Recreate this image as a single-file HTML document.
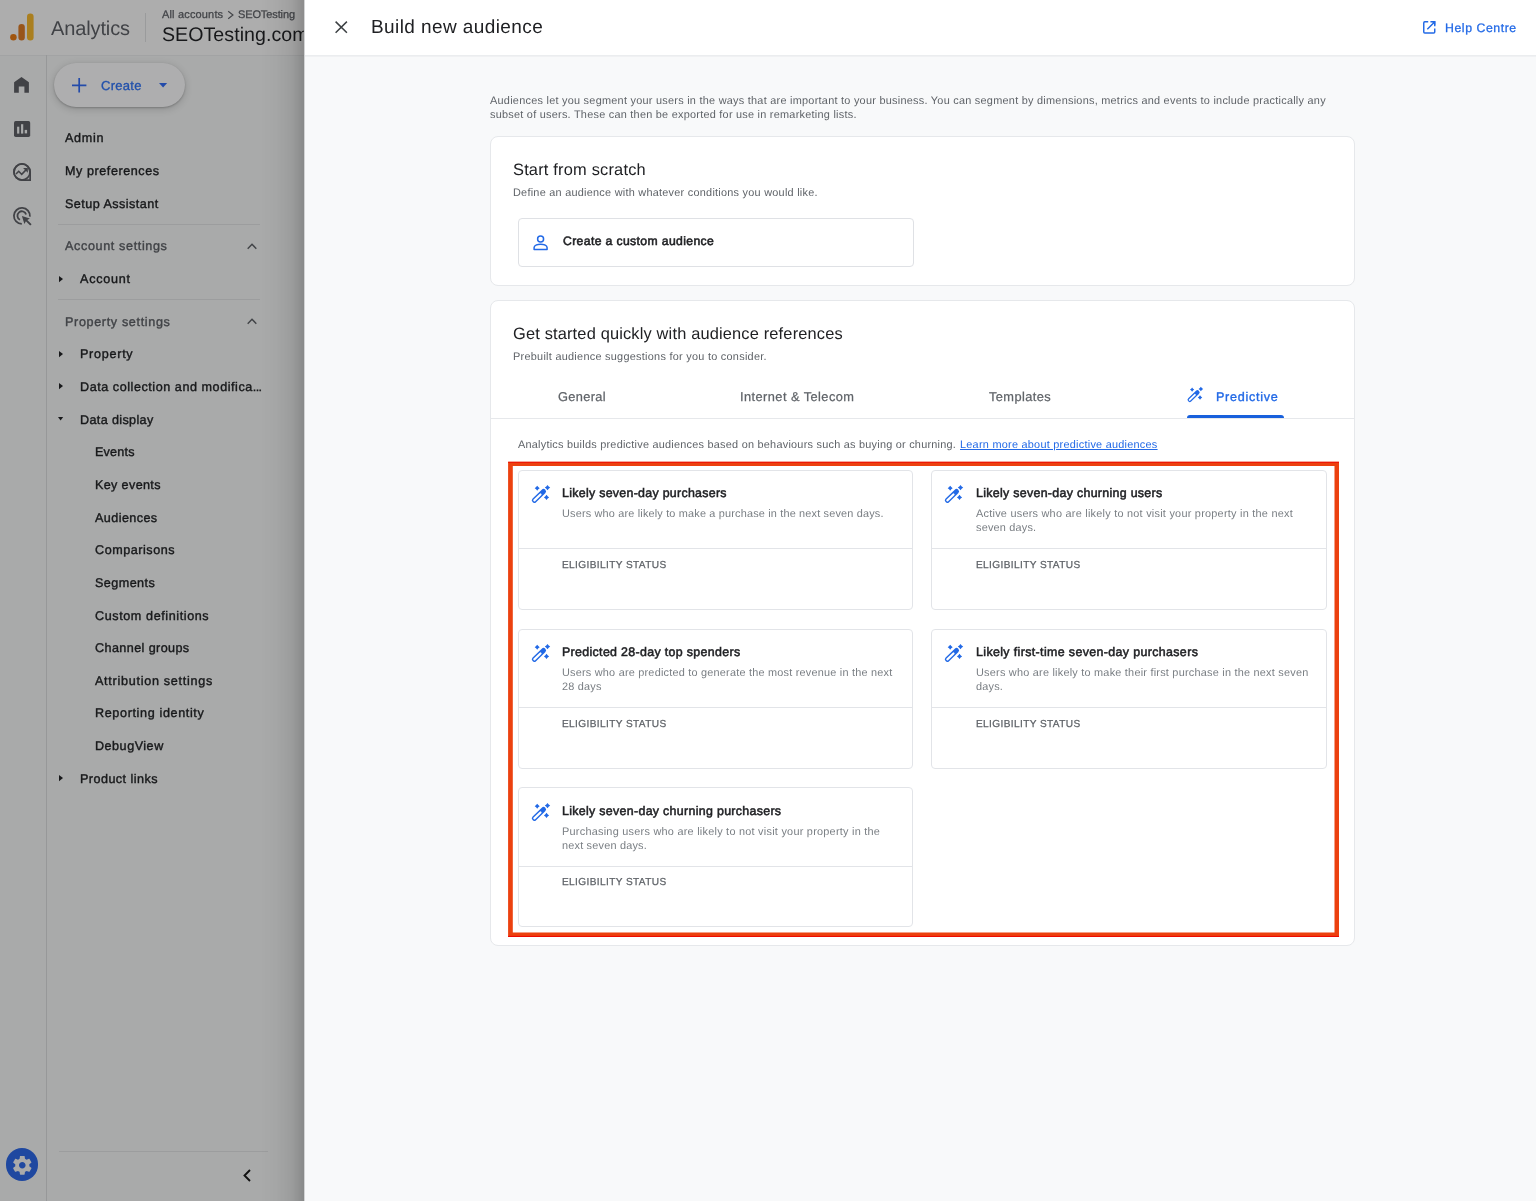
<!DOCTYPE html>
<html lang="en">
<head>
<meta charset="utf-8">
<title>Build new audience</title>
<style>
*{box-sizing:border-box;margin:0;padding:0}
html,body{width:1536px;height:1201px;overflow:hidden;background:#f8f9fa;font-family:"Liberation Sans",sans-serif;color:#202124}
.tx{position:absolute;white-space:nowrap;will-change:transform;text-rendering:geometricPrecision}
.ab{position:absolute}
svg{position:absolute;overflow:visible}
#side{position:absolute;left:0;top:0;width:305px;height:1201px;background:#a9aaaa;overflow:hidden}
#main{position:absolute;left:304px;top:0;width:1232px;height:1201px;background:#f8f9fa}
.card{position:absolute;background:#fff;border:1px solid #e6e8eb;border-radius:8px}
.ac{position:absolute;width:395.4px;height:140.2px;background:#fff;border:1px solid #e2e4e8;border-radius:4px}
.ac i{position:absolute;left:0;right:0;top:77.4px;height:1px;background:#e2e4e8}
</style>
</head>
<body>

<div id="side">
<div class="ab" style="left:0;top:0;width:305px;height:55px;background:#adadad"></div>
<div class="ab" style="left:0;top:54.5px;width:305px;height:1px;background:#a2a3a4"></div>
<div class="ab" style="left:46px;top:55px;width:1px;height:1146px;background:#979899"></div>
<svg style="left:0;top:0" width="46" height="55" viewBox="0 0 46 55"><circle cx="13.4" cy="37.2" r="3.25" fill="#a0550f"/><rect x="18.4" y="23.9" width="6.4" height="16.55" rx="3.2" fill="#98551a"/><rect x="27" y="13.4" width="6.6" height="27.05" rx="3.3" fill="#aa7f1f"/></svg>
<div class="tx" style="left:51.00px;top:16px;font-size:20px;line-height:26px;letter-spacing:-0.125px;color:#414347;">Analytics</div>
<div class="ab" style="left:145px;top:12.5px;width:1px;height:29px;background:#9a9b9c"></div>
<div class="tx" style="left:161.50px;top:8px;font-size:11px;line-height:14px;letter-spacing:0.165px;color:#414347;-webkit-text-stroke:0.25px #414347;">All accounts</div>
<svg style="left:227px;top:10px" width="8" height="10" viewBox="0 0 8 10"><path d="M1.2 1.2 L6 5 L1.2 8.8" fill="none" stroke="#414347" stroke-width="1.1"/></svg>
<div class="tx" style="left:238.00px;top:8px;font-size:11px;line-height:14px;letter-spacing:-0.120px;color:#414347;-webkit-text-stroke:0.25px #414347;">SEOTesting</div>
<div class="tx" style="left:162.00px;top:23px;font-size:19.6px;line-height:25px;color:#17181a;letter-spacing:.05px;">SEOTesting.com</div>
<div class="ab" style="left:53.5px;top:63px;width:131.5px;height:44px;border-radius:22px;background:#aeaeaf;box-shadow:0 1px 2px rgba(0,0,0,.22),0 2px 6px 2px rgba(0,0,0,.10)"></div>
<svg style="left:71.8px;top:77.7px" width="14.4" height="14.6" viewBox="0 0 14.4 14.6"><path d="M7.2 0V14.6M0 7.3H14.4" stroke="#234baa" stroke-width="1.7" fill="none"/></svg>
<div class="tx" style="left:101.20px;top:77px;font-size:13px;line-height:17px;letter-spacing:0.280px;color:#2150ab;-webkit-text-stroke:0.32px #2150ab;">Create</div>
<svg style="left:159.2px;top:83.2px" width="8.2" height="4.6" viewBox="0 0 8.2 4.6"><path d="M0 0H8.2L4.1 4.6Z" fill="#234baa"/></svg>
<svg style="left:14.2px;top:77.2px" width="15" height="16" viewBox="0 0 15 16"><path d="M7.5 0 L14.9 5.3 V15.7 H10.4 V9.6 H4.8 V15.7 H0.1 V5.3 Z" fill="#414246"/></svg>
<svg style="left:13.7px;top:120.8px" width="16.2" height="16" viewBox="0 0 16.2 16"><rect x="0" y="0" width="16.2" height="16" rx="1.7" fill="#414246"/><rect x="3.1" y="5.7" width="2.2" height="6.9" fill="#a9aaaa"/><rect x="7.05" y="3.2" width="2.2" height="9.4" fill="#a9aaaa"/><rect x="10.7" y="8.9" width="2.4" height="3.5" fill="#a9aaaa"/></svg>
<svg style="left:12.7px;top:163.3px" width="18.2" height="18" viewBox="0 0 18.2 18"><path d="M9 0.95 A8.05 8.05 0 1 0 9 17.05 H17.15 V9 A8.05 8.05 0 0 0 9 0.95 Z" fill="none" stroke="#414246" stroke-width="1.7"/><circle cx="9" cy="9" r="8.05" fill="none" stroke="#414246" stroke-width="1.7"/><path d="M3 11 L5.7 8.3 L8.7 11.3 L13 6.9" fill="none" stroke="#414246" stroke-width="1.55"/><path d="M10.1 5.0 H14.8 V9.7 Z" fill="#414246"/></svg>
<svg style="left:12.7px;top:206.8px" width="19" height="18.5" viewBox="0 0 19 18.5"><path d="M16.9 9.6 A8 8 0 1 0 8.8 16.95" fill="none" stroke="#414246" stroke-width="1.8"/><path d="M13.1 7.6 A4.4 4.4 0 1 0 7.0 12.7" fill="none" stroke="#414246" stroke-width="1.8"/><path d="M8.9 8.9 L16.9 11.4 L14.3 12.9 L18.6 17.2 L17.2 18.6 L12.9 14.3 L11.4 16.9 Z" fill="#414246"/></svg>
<div class="tx" style="left:65.30px;top:130px;font-size:12.6px;line-height:16px;letter-spacing:0.695px;color:#17181a;-webkit-text-stroke:0.38px #17181a;">Admin</div>
<div class="tx" style="left:65.30px;top:163px;font-size:12.6px;line-height:16px;letter-spacing:0.560px;color:#17181a;-webkit-text-stroke:0.38px #17181a;">My preferences</div>
<div class="tx" style="left:65.30px;top:196px;font-size:12.6px;line-height:16px;letter-spacing:0.459px;color:#17181a;-webkit-text-stroke:0.38px #17181a;">Setup Assistant</div>
<div class="tx" style="left:65.30px;top:238px;font-size:12.6px;line-height:16px;letter-spacing:0.634px;color:#414347;-webkit-text-stroke:0.38px #414347;">Account settings</div>
<div class="tx" style="left:80.00px;top:271px;font-size:12.6px;line-height:16px;letter-spacing:0.742px;color:#17181a;-webkit-text-stroke:0.38px #17181a;">Account</div>
<div class="tx" style="left:65.30px;top:314px;font-size:12.6px;line-height:16px;letter-spacing:0.646px;color:#414347;-webkit-text-stroke:0.38px #414347;">Property settings</div>
<div class="tx" style="left:80.00px;top:346px;font-size:12.6px;line-height:16px;letter-spacing:0.725px;color:#17181a;-webkit-text-stroke:0.38px #17181a;">Property</div>
<div class="tx" style="left:80.00px;top:379px;font-size:12.6px;line-height:16px;letter-spacing:0.547px;color:#17181a;-webkit-text-stroke:0.38px #17181a;">Data collection and modifica<span style="letter-spacing:-.7px">...</span></div>
<div class="tx" style="left:80.00px;top:412px;font-size:12.6px;line-height:16px;letter-spacing:0.358px;color:#17181a;-webkit-text-stroke:0.38px #17181a;">Data display</div>
<div class="tx" style="left:94.60px;top:444px;font-size:12.6px;line-height:16px;letter-spacing:0.201px;color:#17181a;-webkit-text-stroke:0.38px #17181a;">Events</div>
<div class="tx" style="left:94.60px;top:477px;font-size:12.6px;line-height:16px;letter-spacing:0.355px;color:#17181a;-webkit-text-stroke:0.38px #17181a;">Key events</div>
<div class="tx" style="left:94.60px;top:510px;font-size:12.6px;line-height:16px;letter-spacing:0.420px;color:#17181a;-webkit-text-stroke:0.38px #17181a;">Audiences</div>
<div class="tx" style="left:94.60px;top:542px;font-size:12.6px;line-height:16px;letter-spacing:0.539px;color:#17181a;-webkit-text-stroke:0.38px #17181a;">Comparisons</div>
<div class="tx" style="left:94.60px;top:575px;font-size:12.6px;line-height:16px;letter-spacing:0.434px;color:#17181a;-webkit-text-stroke:0.38px #17181a;">Segments</div>
<div class="tx" style="left:94.60px;top:608px;font-size:12.6px;line-height:16px;letter-spacing:0.592px;color:#17181a;-webkit-text-stroke:0.38px #17181a;">Custom definitions</div>
<div class="tx" style="left:94.60px;top:640px;font-size:12.6px;line-height:16px;letter-spacing:0.403px;color:#17181a;-webkit-text-stroke:0.38px #17181a;">Channel groups</div>
<div class="tx" style="left:94.60px;top:673px;font-size:12.6px;line-height:16px;letter-spacing:0.719px;color:#17181a;-webkit-text-stroke:0.38px #17181a;">Attribution settings</div>
<div class="tx" style="left:94.60px;top:705px;font-size:12.6px;line-height:16px;letter-spacing:0.634px;color:#17181a;-webkit-text-stroke:0.38px #17181a;">Reporting identity</div>
<div class="tx" style="left:94.60px;top:738px;font-size:12.6px;line-height:16px;letter-spacing:0.505px;color:#17181a;-webkit-text-stroke:0.38px #17181a;">DebugView</div>
<div class="tx" style="left:80.00px;top:771px;font-size:12.6px;line-height:16px;letter-spacing:0.447px;color:#17181a;-webkit-text-stroke:0.38px #17181a;">Product links</div>
<div class="ab" style="left:58px;top:223.9px;width:201.5px;height:1px;background:#9c9d9e"></div>
<div class="ab" style="left:58px;top:299.1px;width:201.5px;height:1px;background:#9c9d9e"></div>
<div class="ab" style="left:59px;top:1150.7px;width:209px;height:1px;background:#9c9d9e"></div>
<svg style="left:246.6px;top:242.70000000000002px" width="10" height="6.4" viewBox="0 0 10 6.4"><path d="M0.7 5.7 L5 1.2 L9.3 5.7" fill="none" stroke="#414347" stroke-width="1.4"/></svg>
<svg style="left:246.6px;top:318.0px" width="10" height="6.4" viewBox="0 0 10 6.4"><path d="M0.7 5.7 L5 1.2 L9.3 5.7" fill="none" stroke="#414347" stroke-width="1.4"/></svg>
<svg style="left:58.9px;top:275.5px" width="4" height="6.2" viewBox="0 0 4 6.2"><path d="M0 0 L4 3.1 L0 6.2Z" fill="#17181a"/></svg>
<svg style="left:58.9px;top:350.7px" width="4" height="6.2" viewBox="0 0 4 6.2"><path d="M0 0 L4 3.1 L0 6.2Z" fill="#17181a"/></svg>
<svg style="left:58.9px;top:383.4px" width="4" height="6.2" viewBox="0 0 4 6.2"><path d="M0 0 L4 3.1 L0 6.2Z" fill="#17181a"/></svg>
<svg style="left:58.9px;top:775.0px" width="4" height="6.2" viewBox="0 0 4 6.2"><path d="M0 0 L4 3.1 L0 6.2Z" fill="#17181a"/></svg>
<svg style="left:58.3px;top:417.4px" width="5.2" height="3.6" viewBox="0 0 5.2 3.6"><path d="M0 0 H5.2 L2.6 3.6Z" fill="#17181a"/></svg>
<svg style="left:242.5px;top:1168.5px" width="8" height="13" viewBox="0 0 8 13"><path d="M7 1 L1.5 6.5 L7 12" fill="none" stroke="#111" stroke-width="1.9"/></svg>
<div class="ab" style="left:5.8px;top:1148.3px;width:32.4px;height:32.4px;border-radius:50%;background:#1f48a0"></div>
<svg style="left:10.5px;top:1153.6px" width="22.6" height="22.6" viewBox="0 0 24 24"><path fill="#a9aaaa" d="M19.43 12.98c.04-.32.07-.64.07-.98s-.03-.66-.07-.98l2.11-1.65c.19-.15.24-.42.12-.64l-2-3.46c-.12-.22-.39-.3-.61-.22l-2.49 1c-.52-.4-1.08-.73-1.69-.98l-.38-2.65C14.46 2.18 14.25 2 14 2h-4c-.25 0-.46.18-.49.42l-.38 2.65c-.61.25-1.17.59-1.69.98l-2.49-1c-.23-.09-.49 0-.61.22l-2 3.46c-.13.22-.07.49.12.64l2.11 1.65c-.04.32-.07.65-.07.98s.03.66.07.98l-2.11 1.65c-.19.15-.24.42-.12.64l2 3.46c.12.22.39.3.61.22l2.49-1c.52.4 1.08.73 1.69.98l.38 2.65c.03.24.24.42.49.42h4c.25 0 .46-.18.49-.42l.38-2.65c.61-.25 1.17-.59 1.69-.98l2.49 1c.23.09.49 0 .61-.22l2-3.46c.12-.22.07-.49-.12-.64l-2.11-1.65zM12 15.5c-1.93 0-3.5-1.57-3.5-3.5s1.57-3.5 3.5-3.5 3.5 1.57 3.5 3.5-1.57 3.5-3.5 3.5z"/></svg>
<div class="ab" style="right:0;top:0;width:44px;height:1201px;background:linear-gradient(to right,rgba(0,0,0,0) 0%,rgba(0,0,0,.025) 35%,rgba(0,0,0,.08) 70%,rgba(0,0,0,.20) 100%)"></div>
</div>
<div id="main">
<div class="ab" style="left:0;top:0;width:1232px;height:55.5px;background:#fff"></div>
<div class="ab" style="left:0;top:55px;width:1232px;height:1px;background:#ebedef"></div>
<div class="ab" style="left:0;top:56px;width:1232px;height:1px;background:#f0f1f3"></div>
<div class="ab" style="left:0;top:0;width:1px;height:1201px;background:#d3d4d5"></div>
</div>
<svg style="left:334.9px;top:21.1px" width="12.5" height="12.3" viewBox="0 0 12.5 12.3"><path d="M0.6 0.6 L11.9 11.7 M11.9 0.6 L0.6 11.7" stroke="#3c4043" stroke-width="1.5" fill="none"/></svg>
<div class="tx" style="left:371.30px;top:15px;font-size:19px;line-height:25px;letter-spacing:0.410px;color:#202124;">Build new audience</div>
<svg style="left:1422.8px;top:20.8px" width="12.5" height="12.7" viewBox="0 0 12.5 12.7"><path d="M5.2 0.8 H1.8 Q0.75 0.8 0.75 1.9 V10.9 Q0.75 11.95 1.8 11.95 H10.7 Q11.75 11.95 11.75 10.9 V7.4" fill="none" stroke="#2269e6" stroke-width="1.45"/><path d="M7.4 0.8 H11.75 V5.2 M11.6 0.95 L4.3 8.3" fill="none" stroke="#2269e6" stroke-width="1.45"/><path d="M8.6 0.3 H12.3 V4 Z" fill="#2269e6"/></svg>
<div class="tx" style="left:1444.60px;top:20px;font-size:12.3px;line-height:16px;letter-spacing:0.558px;color:#2269e6;-webkit-text-stroke:0.28px #2269e6;">Help Centre</div>
<div class="tx" style="left:490.30px;top:94px;font-size:10.9px;line-height:14px;letter-spacing:0.257px;color:#5f6368;">Audiences let you segment your users in the ways that are important to your business. You can segment by dimensions, metrics and events to include practically any</div>
<div class="tx" style="left:490.30px;top:108px;font-size:10.9px;line-height:14px;letter-spacing:0.249px;color:#5f6368;">subset of users. These can then be exported for use in remarketing lists.</div>
<div class="card" style="left:490.1px;top:136.1px;width:864.5px;height:149.6px"></div>
<div class="tx" style="left:512.60px;top:160px;font-size:16.4px;line-height:21px;letter-spacing:0.194px;color:#202124;">Start from scratch</div>
<div class="tx" style="left:512.60px;top:186px;font-size:10.9px;line-height:14px;letter-spacing:0.251px;color:#5f6368;">Define an audience with whatever conditions you would like.</div>
<div class="ab" style="left:518px;top:218px;width:396px;height:49px;border:1px solid #dfe1e5;border-radius:4px;background:#fff"></div>
<svg style="left:532.9px;top:234.8px" width="15.2" height="15.2" viewBox="0 0 15.2 15.2"><circle cx="7.6" cy="4.0" r="3.0" fill="none" stroke="#2269e6" stroke-width="1.5"/><path d="M1.1 14.4 V12.6 C1.1 10.2 5 9.2 7.6 9.2 C10.2 9.2 14.1 10.2 14.1 12.6 V14.4 Z" fill="none" stroke="#2269e6" stroke-width="1.5" stroke-linejoin="round"/></svg>
<div class="tx" style="left:563.00px;top:233px;font-size:12.2px;line-height:16px;letter-spacing:0.372px;color:#202124;-webkit-text-stroke:0.55px #202124;">Create a custom audience</div>
<div class="card" style="left:490.1px;top:300.2px;width:864.5px;height:645.9px"></div>
<div class="tx" style="left:512.60px;top:324px;font-size:16.4px;line-height:21px;letter-spacing:0.166px;color:#202124;">Get started quickly with audience references</div>
<div class="tx" style="left:512.60px;top:350px;font-size:10.9px;line-height:14px;letter-spacing:0.270px;color:#5f6368;">Prebuilt audience suggestions for you to consider.</div>
<div class="tx" style="left:557.90px;top:388px;font-size:12.8px;line-height:17px;letter-spacing:0.339px;color:#5f6368;-webkit-text-stroke:0.25px #5f6368;">General</div>
<div class="tx" style="left:740.10px;top:388px;font-size:12.8px;line-height:17px;letter-spacing:0.441px;color:#5f6368;-webkit-text-stroke:0.25px #5f6368;">Internet &amp; Telecom</div>
<div class="tx" style="left:988.90px;top:388px;font-size:12.8px;line-height:17px;letter-spacing:0.429px;color:#5f6368;-webkit-text-stroke:0.25px #5f6368;">Templates</div>
<div class="tx" style="left:1215.50px;top:389px;font-size:12.6px;line-height:16px;letter-spacing:0.721px;color:#2269e6;-webkit-text-stroke:0.35px #2269e6;">Predictive</div>
<div class="ab" style="left:491px;top:418px;width:862.6px;height:1px;background:#e6e8eb"></div>
<div class="ab" style="left:1186.7px;top:415px;width:97.8px;height:3px;background:#1860dc;border-radius:3px 3px 0 0"></div>
<svg style="left:1186.2px;top:385.85px" width="18.7" height="17.0" viewBox="0 0 22 20"><path d="M4.35 16.35 L13.5 7.5" stroke="#2269e6" stroke-width="5.0" stroke-linecap="round" fill="none"/><path d="M4.35 16.35 L10.48 10.42" stroke="#fff" stroke-width="2.2" stroke-linecap="round" fill="none"/><path d="M7.2 1.7000000000000002 L8.3 3.1 L9.7 4.2 L8.3 5.300000000000001 L7.2 6.7 L6.1 5.300000000000001 L4.7 4.2 L6.1 3.1Z M17.5 0.8999999999999999 L18.688 2.412 L20.2 3.6 L18.688 4.788 L17.5 6.300000000000001 L16.312 4.788 L14.8 3.6 L16.312 2.412Z M16.5 10.85 L17.644 12.306 L19.1 13.45 L17.644 14.594 L16.5 16.05 L15.356 14.594 L13.9 13.45 L15.356 12.306Z" fill="#2269e6"/></svg>
<div class="tx" style="left:518.10px;top:438px;font-size:10.9px;line-height:14px;letter-spacing:0.240px;color:#5f6368;">Analytics builds predictive audiences based on behaviours such as buying or churning.</div>
<div class="tx" style="left:960.40px;top:438px;font-size:10.9px;line-height:14px;letter-spacing:0.251px;color:#2269e6;text-decoration:underline;text-underline-offset:1px;text-decoration-thickness:.9px;">Learn more about predictive audiences</div>
<svg style="left:0;top:0" width="1536" height="1201" viewBox="0 0 1536 1201"><path fill-rule="evenodd" fill="#ec410f" d="M508.1 461.8H1339V937H508.1Z M512.8 466H1334.5V932.6H512.8Z"/><rect x="508.1" y="461.8" width="830.9" height="1.1" fill="#ee1405"/><rect x="508.1" y="935.9" width="830.9" height="1.1" fill="#ee0a02"/></svg>
<div class="ac" style="left:518px;top:469.6px"><i></i></div>
<svg style="left:530px;top:484.0px" width="22.0" height="20.0" viewBox="0 0 22 20"><path d="M4.35 16.35 L13.5 7.5" stroke="#2269e6" stroke-width="5.0" stroke-linecap="round" fill="none"/><path d="M4.35 16.35 L10.48 10.42" stroke="#fff" stroke-width="2.2" stroke-linecap="round" fill="none"/><path d="M7.2 1.7000000000000002 L8.3 3.1 L9.7 4.2 L8.3 5.300000000000001 L7.2 6.7 L6.1 5.300000000000001 L4.7 4.2 L6.1 3.1Z M17.5 0.8999999999999999 L18.688 2.412 L20.2 3.6 L18.688 4.788 L17.5 6.300000000000001 L16.312 4.788 L14.8 3.6 L16.312 2.412Z M16.5 10.85 L17.644 12.306 L19.1 13.45 L17.644 14.594 L16.5 16.05 L15.356 14.594 L13.9 13.45 L15.356 12.306Z" fill="#2269e6"/></svg>
<div class="tx" style="left:562.30px;top:485px;font-size:12.4px;line-height:16px;letter-spacing:0.290px;color:#202124;-webkit-text-stroke:0.5px #202124;">Likely seven-day purchasers</div>
<div class="tx" style="left:562.30px;top:507px;font-size:10.9px;line-height:14px;letter-spacing:0.176px;color:#797e83;">Users who are likely to make a purchase in the next seven days.</div>
<div class="tx" style="left:562.30px;top:559px;font-size:10.1px;line-height:13px;letter-spacing:0.384px;color:#5f6368;-webkit-text-stroke:0.25px #5f6368;">ELIGIBILITY STATUS</div>
<div class="ac" style="left:931.2px;top:469.6px"><i></i></div>
<svg style="left:943.2px;top:484.0px" width="22.0" height="20.0" viewBox="0 0 22 20"><path d="M4.35 16.35 L13.5 7.5" stroke="#2269e6" stroke-width="5.0" stroke-linecap="round" fill="none"/><path d="M4.35 16.35 L10.48 10.42" stroke="#fff" stroke-width="2.2" stroke-linecap="round" fill="none"/><path d="M7.2 1.7000000000000002 L8.3 3.1 L9.7 4.2 L8.3 5.300000000000001 L7.2 6.7 L6.1 5.300000000000001 L4.7 4.2 L6.1 3.1Z M17.5 0.8999999999999999 L18.688 2.412 L20.2 3.6 L18.688 4.788 L17.5 6.300000000000001 L16.312 4.788 L14.8 3.6 L16.312 2.412Z M16.5 10.85 L17.644 12.306 L19.1 13.45 L17.644 14.594 L16.5 16.05 L15.356 14.594 L13.9 13.45 L15.356 12.306Z" fill="#2269e6"/></svg>
<div class="tx" style="left:975.50px;top:485px;font-size:12.4px;line-height:16px;letter-spacing:0.306px;color:#202124;-webkit-text-stroke:0.5px #202124;">Likely seven-day churning users</div>
<div class="tx" style="left:975.50px;top:507px;font-size:10.9px;line-height:14px;letter-spacing:0.244px;color:#797e83;">Active users who are likely to not visit your property in the next</div>
<div class="tx" style="left:975.50px;top:521px;font-size:10.9px;line-height:14px;color:#797e83;letter-spacing:.2px;">seven days.</div>
<div class="tx" style="left:975.50px;top:559px;font-size:10.1px;line-height:13px;letter-spacing:0.384px;color:#5f6368;-webkit-text-stroke:0.25px #5f6368;">ELIGIBILITY STATUS</div>
<div class="ac" style="left:518px;top:628.5px"><i></i></div>
<svg style="left:530px;top:642.9px" width="22.0" height="20.0" viewBox="0 0 22 20"><path d="M4.35 16.35 L13.5 7.5" stroke="#2269e6" stroke-width="5.0" stroke-linecap="round" fill="none"/><path d="M4.35 16.35 L10.48 10.42" stroke="#fff" stroke-width="2.2" stroke-linecap="round" fill="none"/><path d="M7.2 1.7000000000000002 L8.3 3.1 L9.7 4.2 L8.3 5.300000000000001 L7.2 6.7 L6.1 5.300000000000001 L4.7 4.2 L6.1 3.1Z M17.5 0.8999999999999999 L18.688 2.412 L20.2 3.6 L18.688 4.788 L17.5 6.300000000000001 L16.312 4.788 L14.8 3.6 L16.312 2.412Z M16.5 10.85 L17.644 12.306 L19.1 13.45 L17.644 14.594 L16.5 16.05 L15.356 14.594 L13.9 13.45 L15.356 12.306Z" fill="#2269e6"/></svg>
<div class="tx" style="left:562.30px;top:644px;font-size:12.4px;line-height:16px;letter-spacing:0.333px;color:#202124;-webkit-text-stroke:0.5px #202124;">Predicted 28-day top spenders</div>
<div class="tx" style="left:562.30px;top:666px;font-size:10.9px;line-height:14px;letter-spacing:0.216px;color:#797e83;">Users who are predicted to generate the most revenue in the next</div>
<div class="tx" style="left:562.30px;top:680px;font-size:10.9px;line-height:14px;color:#797e83;letter-spacing:.2px;">28 days</div>
<div class="tx" style="left:562.30px;top:718px;font-size:10.1px;line-height:13px;letter-spacing:0.384px;color:#5f6368;-webkit-text-stroke:0.25px #5f6368;">ELIGIBILITY STATUS</div>
<div class="ac" style="left:931.2px;top:628.5px"><i></i></div>
<svg style="left:943.2px;top:642.9px" width="22.0" height="20.0" viewBox="0 0 22 20"><path d="M4.35 16.35 L13.5 7.5" stroke="#2269e6" stroke-width="5.0" stroke-linecap="round" fill="none"/><path d="M4.35 16.35 L10.48 10.42" stroke="#fff" stroke-width="2.2" stroke-linecap="round" fill="none"/><path d="M7.2 1.7000000000000002 L8.3 3.1 L9.7 4.2 L8.3 5.300000000000001 L7.2 6.7 L6.1 5.300000000000001 L4.7 4.2 L6.1 3.1Z M17.5 0.8999999999999999 L18.688 2.412 L20.2 3.6 L18.688 4.788 L17.5 6.300000000000001 L16.312 4.788 L14.8 3.6 L16.312 2.412Z M16.5 10.85 L17.644 12.306 L19.1 13.45 L17.644 14.594 L16.5 16.05 L15.356 14.594 L13.9 13.45 L15.356 12.306Z" fill="#2269e6"/></svg>
<div class="tx" style="left:975.50px;top:644px;font-size:12.4px;line-height:16px;letter-spacing:0.375px;color:#202124;-webkit-text-stroke:0.5px #202124;">Likely first-time seven-day purchasers</div>
<div class="tx" style="left:975.50px;top:666px;font-size:10.9px;line-height:14px;letter-spacing:0.228px;color:#797e83;">Users who are likely to make their first purchase in the next seven</div>
<div class="tx" style="left:975.50px;top:680px;font-size:10.9px;line-height:14px;color:#797e83;letter-spacing:.2px;">days.</div>
<div class="tx" style="left:975.50px;top:718px;font-size:10.1px;line-height:13px;letter-spacing:0.384px;color:#5f6368;-webkit-text-stroke:0.25px #5f6368;">ELIGIBILITY STATUS</div>
<div class="ac" style="left:518px;top:787.2px"><i></i></div>
<svg style="left:530px;top:801.6px" width="22.0" height="20.0" viewBox="0 0 22 20"><path d="M4.35 16.35 L13.5 7.5" stroke="#2269e6" stroke-width="5.0" stroke-linecap="round" fill="none"/><path d="M4.35 16.35 L10.48 10.42" stroke="#fff" stroke-width="2.2" stroke-linecap="round" fill="none"/><path d="M7.2 1.7000000000000002 L8.3 3.1 L9.7 4.2 L8.3 5.300000000000001 L7.2 6.7 L6.1 5.300000000000001 L4.7 4.2 L6.1 3.1Z M17.5 0.8999999999999999 L18.688 2.412 L20.2 3.6 L18.688 4.788 L17.5 6.300000000000001 L16.312 4.788 L14.8 3.6 L16.312 2.412Z M16.5 10.85 L17.644 12.306 L19.1 13.45 L17.644 14.594 L16.5 16.05 L15.356 14.594 L13.9 13.45 L15.356 12.306Z" fill="#2269e6"/></svg>
<div class="tx" style="left:562.30px;top:803px;font-size:12.4px;line-height:16px;letter-spacing:0.316px;color:#202124;-webkit-text-stroke:0.5px #202124;">Likely seven-day churning purchasers</div>
<div class="tx" style="left:562.30px;top:825px;font-size:10.9px;line-height:14px;letter-spacing:0.248px;color:#797e83;">Purchasing users who are likely to not visit your property in the</div>
<div class="tx" style="left:562.30px;top:839px;font-size:10.9px;line-height:14px;color:#797e83;letter-spacing:.2px;">next seven days.</div>
<div class="tx" style="left:562.30px;top:876px;font-size:10.1px;line-height:13px;letter-spacing:0.384px;color:#5f6368;-webkit-text-stroke:0.25px #5f6368;">ELIGIBILITY STATUS</div>
</body>
</html>
